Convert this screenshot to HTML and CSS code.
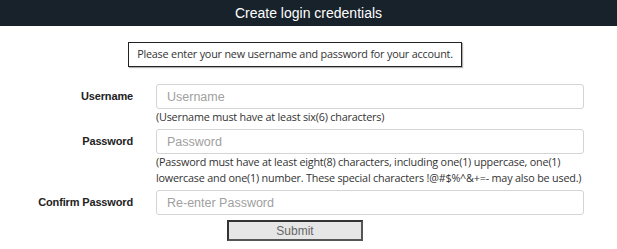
FILE: index.html
```html
<!DOCTYPE html>
<html lang="en">

<head>
    <meta charset="UTF-8">
    <title>Create login credentials</title>
    <link rel="stylesheet" href="styles.css">
</head>

<body>

    <div class="header">Create login credentials</div>

    <div class="page">
        <div class="notice-row">
            <div class="notice">Please enter your new username and password for your account.</div>
        </div>

        <form class="form">
            <label class="label" for="username">Username</label>
            <div class="field">
                <input class="input" id="username" type="text" placeholder="Username">
                <div class="hint">(Username must have at least six(6) characters)</div>
            </div>

            <label class="label" for="password">Password</label>
            <div class="field">
                <input class="input" id="password" type="password" placeholder="Password">
                <div class="hint">(Password must have at least eight(8) characters, including one(1) uppercase, one(1) lowercase and one(1) number. These special characters !@#$%^&amp;+=- may also be used.)</div>
            </div>

            <label class="label" for="confirm">Confirm Password</label>
            <div class="field">
                <input class="input" id="confirm" type="password" placeholder="Re-enter Password">
            </div>
        </form>

        <div class="actions">
            <button class="submit" type="button">Submit</button>
        </div>
    </div>

</body>

</html>
```

FILE: styles.css
```css
body {
    margin: 0;
    background: #fff;
    font-family: "Open Sans", "Liberation Sans", sans-serif;
    color: #333;
}

.header {
    height: 26px;
    line-height: 26px;
    background-color: #18222b;
    color: #fff;
    text-align: center;
    font-family: "Liberation Sans", Arial, sans-serif;
    font-size: 14px;
}

.page {
    width: 590px;
}

.notice-row {
    display: flex;
    justify-content: center;
    padding-top: 16px;
}

.notice {
    box-sizing: border-box;
    width: 334px;
    height: 25px;
    line-height: 22px;
    text-align: center;
    border: 1px solid #222;
    box-shadow: 1px 1px 1px rgba(0, 0, 0, 0.3);
    white-space: nowrap;
    font-size: 10.8px;
    letter-spacing: -0.2px;
    color: #333;
}

.form {
    display: grid;
    grid-template-columns: 133px 428px;
    column-gap: 23px;
    row-gap: 4px;
    margin-top: 17px;
}

.label {
    height: 25px;
    line-height: 25px;
    text-align: right;
    font-family: "Liberation Sans", Arial, sans-serif;
    font-weight: bold;
    font-size: 11px;
    letter-spacing: -0.15px;
    color: #222;
}

.input {
    display: block;
    box-sizing: border-box;
    width: 100%;
    height: 25px;
    margin: 0;
    padding: 0 10px;
    border: 1px solid #d4d4d4;
    border-radius: 3px;
    font-family: "Liberation Sans", Arial, sans-serif;
    font-size: 12.5px;
}

.input::placeholder {
    color: #a0a0a0;
}

.hint {
    font-size: 10.8px;
    letter-spacing: -0.2px;
    line-height: 16px;
    color: #333;
}

.actions {
    display: flex;
    justify-content: center;
    margin-top: 5px;
}

.submit {
    box-sizing: border-box;
    width: 136px;
    height: 21px;
    padding: 0;
    background-color: #e6e6e6;
    border: 2px solid #333;
    border-right-color: #555;
    border-bottom-color: #555;
    font-family: "Liberation Sans", Arial, sans-serif;
    font-size: 12px;
    color: #666;
}
```
